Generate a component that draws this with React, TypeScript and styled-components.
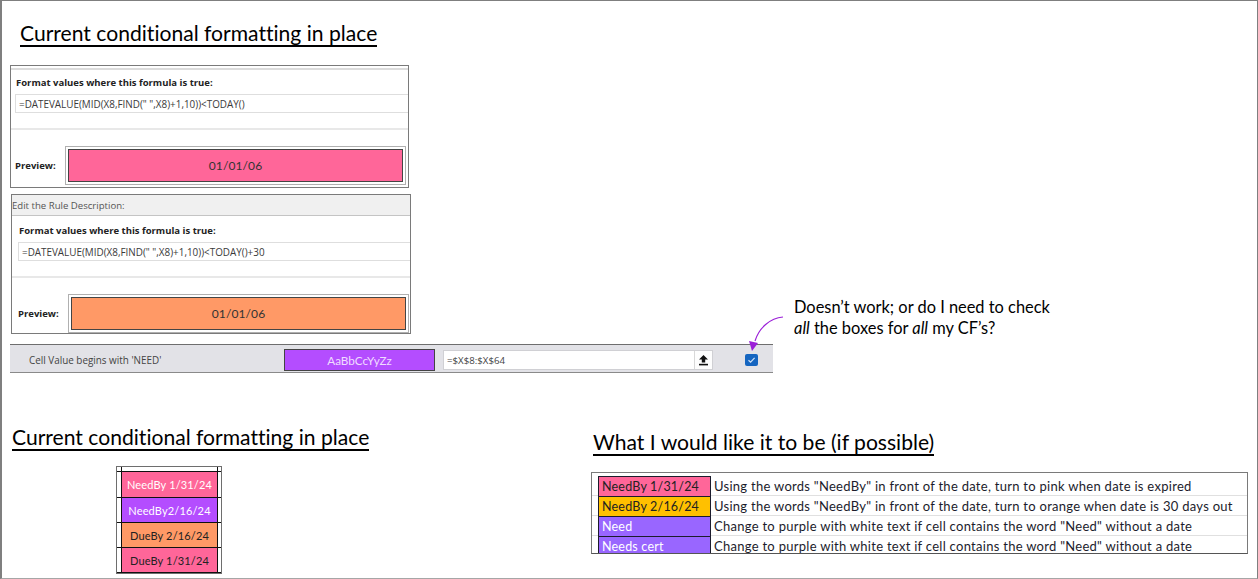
import React from "react";
import styled, { createGlobalStyle } from "styled-components";

const GlobalStyle = createGlobalStyle`
  html, body {
    margin: 0;
    padding: 0;
    background: #ffffff;
  }
`;

const Page = styled.div`
  position: relative;
  box-sizing: border-box;
  width: 1258px;
  height: 579px;
  overflow: hidden;
  background: #ffffff;
  border: 1px solid #7f7f7f;
  border-left-width: 2px;
  border-bottom-color: #a6a6a6;
  font-family: "Lato", "Liberation Sans", sans-serif;
  color: #000;
`;

const Heading = styled.h2<{ $left: number; $top: number }>`
  display: table;
  margin: ${({ $top }) => $top}px 0 0 ${({ $left }) => $left}px;
  font-size: 21.1px;
  font-weight: 400;
  line-height: 25px;
  border-bottom: 2px solid #000;
  white-space: nowrap;
  font-variant-ligatures: none;
`;

const UpperArea = styled.div`
  display: flex;
  margin-top: 18px;
`;

const Panels = styled.div`
  display: flex;
  flex-direction: column;
  gap: 6px;
`;

const DialogPanel = styled.div<{ $left: number; $width: number; $height: number }>`
  box-sizing: border-box;
  width: ${({ $width }) => $width}px;
  height: ${({ $height }) => $height}px;
  margin-left: ${({ $left }) => $left}px;
  border: 1px solid #7a7a7a;
  background: #fff;
  font-family: "Open Sans", "Liberation Sans", sans-serif;
`;

const PanelTopLine = styled.div`
  height: 2px;
  margin-top: 2px;
  background: #dcdcdc;
`;

const PanelHeader = styled.div`
  box-sizing: border-box;
  height: 21px;
  padding-top: 3px;
  background: #f0f0f0;
  border-bottom: 1px solid #c4c4c4;
  font-size: 9.6px;
  line-height: 15px;
  color: #555;
`;

const FormulaLabel = styled.div<{ $top: number; $left: number }>`
  margin: ${({ $top }) => $top}px 0 0 ${({ $left }) => $left}px;
  font-size: 9.5px;
  font-weight: 700;
  line-height: 13px;
  color: #222;
`;

const FormulaInput = styled.div<{ $left: number }>`
  box-sizing: border-box;
  height: 19px;
  margin: 5px 0 0 ${({ $left }) => $left}px;
  padding-left: 3px;
  border: 1px solid #dedede;
  border-right: none;
  font-size: 9.9px;
  line-height: 19px;
  color: #3a3a3a;
  white-space: nowrap;
`;

const PanelDivider = styled.div<{ $top: number }>`
  height: 2px;
  margin-top: ${({ $top }) => $top}px;
  background: #e8e8e8;
`;

const PreviewRow = styled.div<{ $top: number; $left: number }>`
  display: flex;
  align-items: center;
  margin: ${({ $top }) => $top}px 0 0 ${({ $left }) => $left}px;
`;

const PreviewLabel = styled.div`
  width: 50px;
  font-size: 9.5px;
  font-weight: 700;
  color: #222;
`;

const PreviewFrame = styled.div`
  box-sizing: border-box;
  width: 341px;
  height: 39px;
  padding: 2px;
  border: 1px solid #b0b0b0;
`;

const PreviewSwatch = styled.div<{ $bg: string }>`
  box-sizing: border-box;
  display: flex;
  align-items: center;
  justify-content: center;
  height: 100%;
  background: ${({ $bg }) => $bg};
  border: 1px solid #444;
  font-family: "Lato", "Liberation Sans", sans-serif;
  font-size: 12px;
  letter-spacing: 0.1px;
  color: #333;
`;

const NoteColumn = styled.div`
  margin: 231px 0 -4px 383px;
  font-size: 16.4px;
  line-height: 21px;
  white-space: nowrap;
`;

const RuleRow = styled.div`
  box-sizing: border-box;
  display: flex;
  align-items: center;
  width: 763px;
  height: 29px;
  margin: 10px 0 0 8px;
  padding: 2px 0 0 19px;
  background: #e2e2e7;
  border-top: 1px solid #6e6e6e;
  border-bottom: 1px solid #8a8a8a;
  font-family: "Open Sans", "Liberation Sans", sans-serif;
  font-size: 9.9px;
  color: #444;
`;

const RuleName = styled.div`
  width: 255px;
`;

const RuleSwatch = styled.div`
  box-sizing: border-box;
  display: flex;
  align-items: center;
  justify-content: center;
  width: 151px;
  height: 22px;
  background: #b44dff;
  border: 1px solid #444;
  font-family: "Lato", "Liberation Sans", sans-serif;
  font-size: 11.7px;
  color: #f0dcff;
`;

const RangeField = styled.div`
  box-sizing: border-box;
  display: flex;
  align-items: center;
  justify-content: space-between;
  width: 270px;
  height: 20px;
  margin-left: 8px;
  padding-left: 3px;
  background: #fff;
  border: 1px solid #d0d0d4;
  font-size: 9.7px;
  color: #444;
`;

const RangeText = styled.span`
  margin-top: 2px;
`;

const RangeButton = styled.div`
  display: flex;
  align-items: center;
  justify-content: center;
  width: 17px;
  height: 18px;
  background: #fdfdfd;
  border-left: 1px solid #d8d8d8;
`;

const CheckBox = styled.div`
  display: flex;
  align-items: center;
  justify-content: center;
  width: 13px;
  height: 12px;
  margin-left: 32px;
  border-radius: 2px;
  background: #1565c0;
`;

const CalloutArrow = styled.svg`
  position: absolute;
  left: 735px;
  top: 305px;
  width: 60px;
  height: 55px;
  overflow: visible;
`;

const LowerArea = styled.div`
  display: flex;
`;

const LeftLower = styled.div`
  width: 579px;
`;

const RightLower = styled.div`
  flex: 1;
`;

const SheetFragment = styled.div`
  box-sizing: border-box;
  display: grid;
  grid-template-columns: 5px 95px 4px;
  grid-template-rows: 5px 26px 25px 25px 25px;
  width: 106px;
  height: 108px;
  margin: 15px 0 0 114px;
  background: #000;
  border: 1px solid #6e6e6e;
`;

const SheetGutter = styled.div<{ $row: number; $side: "l" | "r" }>`
  grid-row: ${({ $row }) => $row};
  grid-column: ${({ $side }) => ($side === "l" ? 1 : 3)};
  background: #fff;
  border-bottom: 1px solid #111;
  ${({ $side }) =>
    $side === "l" ? "border-right: 1px solid #111;" : "border-left: 1px solid #111;"}
`;

const SheetCell = styled.div<{ $bg: string; $fg: string; $row: number }>`
  grid-row: ${({ $row }) => $row};
  grid-column: 2;
  display: flex;
  align-items: center;
  justify-content: center;
  background: ${({ $bg }) => $bg};
  color: ${({ $fg }) => $fg};
  border-bottom: 1px solid #111;
  font-size: 11px;
  letter-spacing: 0.15px;
  white-space: nowrap;
`;

const SheetHeadCell = styled.div`
  grid-row: 1;
  grid-column: 2;
  background: #fff;
  border-bottom: 1px solid #111;
`;

const WishTable = styled.div`
  box-sizing: border-box;
  width: 657px;
  height: 82px;
  margin: 16px 0 0 10px;
  padding-top: 3px;
  overflow: hidden;
  border: 1px solid #7a7a7a;
  border-bottom-color: #555;
`;

const WishRow = styled.div`
  display: flex;
  height: 20px;
  border-bottom: 1px solid #e0e0e0;
  box-sizing: border-box;
`;

const WishKey = styled.div<{ $bg: string; $fg: string }>`
  box-sizing: border-box;
  width: 113px;
  height: 20px;
  margin-left: 6px;
  padding-left: 3px;
  background: ${({ $bg }) => $bg};
  color: ${({ $fg }) => $fg};
  border: 1px solid #1c1c2c;
  border-bottom: none;
  font-size: 12.5px;
  line-height: 20px;
  letter-spacing: 0.2px;
  white-space: nowrap;
`;

const WishText = styled.div`
  padding-left: 3px;
  font-size: 13px;
  line-height: 21px;
  letter-spacing: 0.28px;
  color: #1c1c2c;
  white-space: nowrap;
`;

const sheetRows = [
  { text: "NeedBy 1/31/24", bg: "#ff6699", fg: "#fff" },
  { text: "NeedBy2/16/24", bg: "#b44dff", fg: "#fff" },
  { text: "DueBy 2/16/24", bg: "#ff9966", fg: "#222" },
  { text: "DueBy 1/31/24", bg: "#ff6699", fg: "#222" },
];

const wishRows = [
  {
    key: "NeedBy 1/31/24",
    bg: "#ff6699",
    fg: "#222",
    text: 'Using the words "NeedBy" in front of the date, turn to pink when date is expired',
  },
  {
    key: "NeedBy 2/16/24",
    bg: "#ffc000",
    fg: "#222",
    text: 'Using the words "NeedBy" in front of the date, turn to orange when date is 30 days out',
  },
  {
    key: "Need",
    bg: "#9966ff",
    fg: "#fff",
    text: 'Change to purple with white text if cell contains the word "Need" without a date',
  },
  {
    key: "Needs cert",
    bg: "#9966ff",
    fg: "#fff",
    text: 'Change to purple with white text if cell contains the word "Need" without a date',
  },
];

const App: React.FC = () => {
  return (
    <Page>
      <GlobalStyle />
      <Heading $left={18} $top={19}>
        Current conditional formatting in place
      </Heading>

      <UpperArea>
        <Panels>
          <DialogPanel $left={8} $width={399} $height={123}>
            <PanelTopLine />
            <FormulaLabel $top={6} $left={5}>
              Format values where this formula is true:
            </FormulaLabel>
            <FormulaInput $left={4}>
              =DATEVALUE(MID(X8,FIND(" ",X8)+1,10))&lt;TODAY()
            </FormulaInput>
            <PanelDivider $top={15} />
            <PreviewRow $top={16} $left={4}>
              <PreviewLabel>Preview:</PreviewLabel>
              <PreviewFrame>
                <PreviewSwatch $bg="#ff6699">01/01/06</PreviewSwatch>
              </PreviewFrame>
            </PreviewRow>
          </DialogPanel>

          <DialogPanel $left={9} $width={400} $height={140}>
            <PanelHeader>Edit the Rule Description:</PanelHeader>
            <FormulaLabel $top={8} $left={7}>
              Format values where this formula is true:
            </FormulaLabel>
            <FormulaInput $left={6}>
              =DATEVALUE(MID(X8,FIND(" ",X8)+1,10))&lt;TODAY()+30
            </FormulaInput>
            <PanelDivider $top={15} />
            <PreviewRow $top={16} $left={6}>
              <PreviewLabel>Preview:</PreviewLabel>
              <PreviewFrame>
                <PreviewSwatch $bg="#ff9966">01/01/06</PreviewSwatch>
              </PreviewFrame>
            </PreviewRow>
          </DialogPanel>
        </Panels>

        <NoteColumn>
          Doesn’t work; or do I need to check
          <br />
          <i>all</i> the boxes for <i>all</i> my CF’s?
        </NoteColumn>
      </UpperArea>

      <RuleRow>
        <RuleName>Cell Value begins with 'NEED'</RuleName>
        <RuleSwatch>AaBbCcYyZz</RuleSwatch>
        <RangeField>
          <RangeText>=$X$8:$X$64</RangeText>
          <RangeButton>
            <svg width="11" height="12" viewBox="0 0 11 12">
              <path d="M5.5 1 L10 5.5 H7.2 V8.5 H3.8 V5.5 H1 Z" fill="#111" />
              <rect x="1" y="9.8" width="9" height="1.6" fill="#111" />
            </svg>
          </RangeButton>
        </RangeField>
        <CheckBox>
          <svg width="9" height="8" viewBox="0 0 9 8">
            <path d="M1.5 4.2 L3.6 6.2 L7.6 1.8" fill="none" stroke="#cfe2f7" strokeWidth="1.2" />
          </svg>
        </CheckBox>
      </RuleRow>

      <CalloutArrow viewBox="0 0 60 55">
        <path d="M46 11 C33 12 22 22 18 35" fill="none" stroke="#9b1fd8" strokeWidth="1.2" />
        <path d="M12 35 L21 37 L15 45 Z" fill="#9b1fd8" />
      </CalloutArrow>

      <LowerArea>
        <LeftLower>
          <Heading $left={10} $top={51}>
            Current conditional formatting in place
          </Heading>
          <SheetFragment>
            <SheetGutter $row={1} $side="l" />
            <SheetHeadCell />
            <SheetGutter $row={1} $side="r" />
            {sheetRows.map((row, index) => (
              <React.Fragment key={index}>
                <SheetGutter $row={index + 2} $side="l" />
                <SheetCell $row={index + 2} $bg={row.bg} $fg={row.fg}>
                  {row.text}
                </SheetCell>
                <SheetGutter $row={index + 2} $side="r" />
              </React.Fragment>
            ))}
          </SheetFragment>
        </LeftLower>
        <RightLower>
          <Heading $left={12} $top={56}>
            What I would like it to be (if possible)
          </Heading>
          <WishTable>
            {wishRows.map((row, index) => (
              <WishRow key={index}>
                <WishKey $bg={row.bg} $fg={row.fg}>
                  {row.key}
                </WishKey>
                <WishText>{row.text}</WishText>
              </WishRow>
            ))}
          </WishTable>
        </RightLower>
      </LowerArea>
    </Page>
  );
};

export default App;
